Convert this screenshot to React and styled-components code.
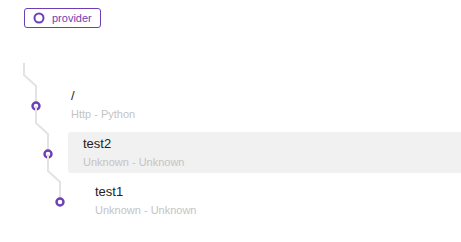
import React from 'react'
import styled, { createGlobalStyle } from 'styled-components'

const PURPLE = '#6c3fb5'
const LINE = '#e3e3e3'

const GlobalStyle = createGlobalStyle`
  html, body {
    margin: 0;
    padding: 0;
    background: #fff;
    font-family: 'Liberation Sans', Arial, sans-serif;
  }
`

const nodes = [
  { title: '/', sub: 'Http - Python' },
  { title: 'test2', sub: 'Unknown - Unknown', active: true },
  { title: 'test1', sub: 'Unknown - Unknown' },
]

export default function App() {
  return (
    <Page>
      <GlobalStyle />
      <Header>
        <Badge>
          <svg width="12" height="12" viewBox="0 0 12 12">
            <circle cx="6" cy="6" r="4.5" fill="none" stroke={PURPLE} strokeWidth="2" />
          </svg>
          <span>provider</span>
        </Badge>
      </Header>
      <Tree>
        {nodes.map((n, i) => {
          const px = 24 + 12 * i
          const cx = px + 12
          const start = i === 0 ? -14 : -19
          return (
            <Row key={n.title}>
              <Gutter width={56 + 12 * i} height="48">
                <path
                  d={`M${px} ${start} V-2 L${cx} 9 V29`}
                  fill="none"
                  stroke={LINE}
                  strokeWidth="2"
                />
                <circle cx={cx} cy="29" r="3.5" fill="#fff" stroke={PURPLE} strokeWidth="2.4" />
              </Gutter>
              <Card $active={n.active}>
                <Title>{n.title}</Title>
                <Sub>{n.sub}</Sub>
              </Card>
            </Row>
          )
        })}
      </Tree>
    </Page>
  )
}

const Page = styled.div`
  padding-top: 8px;
`

const Header = styled.div`
  display: flex;
  padding-left: 24px;
`

const Badge = styled.div`
  display: flex;
  align-items: center;
  gap: 7px;
  height: 20px;
  box-sizing: border-box;
  padding: 0 8px 0 8px;
  border: 1px solid ${PURPLE};
  border-radius: 3px;
  color: ${PURPLE};
  font-size: 11px;
  svg { display: block; }
`

const Tree = styled.div`
  display: flex;
  flex-direction: column;
  margin-top: 49px;
`

const Row = styled.div`
  display: flex;
  height: 48px;
`

const Gutter = styled.svg`
  flex: none;
  display: block;
  overflow: visible;
`

const Card = styled.div`
  flex: 1;
  margin-top: 7px;
  height: 41px;
  box-sizing: border-box;
  padding: 4px 0 0 15px;
  border-radius: 3px 0 0 3px;
  background: ${p => (p.$active ? '#f1f1f1' : 'transparent')};
`

const Title = styled.div`
  font-size: 13px;
  line-height: 15px;
  color: #222;
`

const Sub = styled.div`
  margin-top: 4px;
  font-size: 11px;
  line-height: 14px;
  color: #c4c4c4;
`
